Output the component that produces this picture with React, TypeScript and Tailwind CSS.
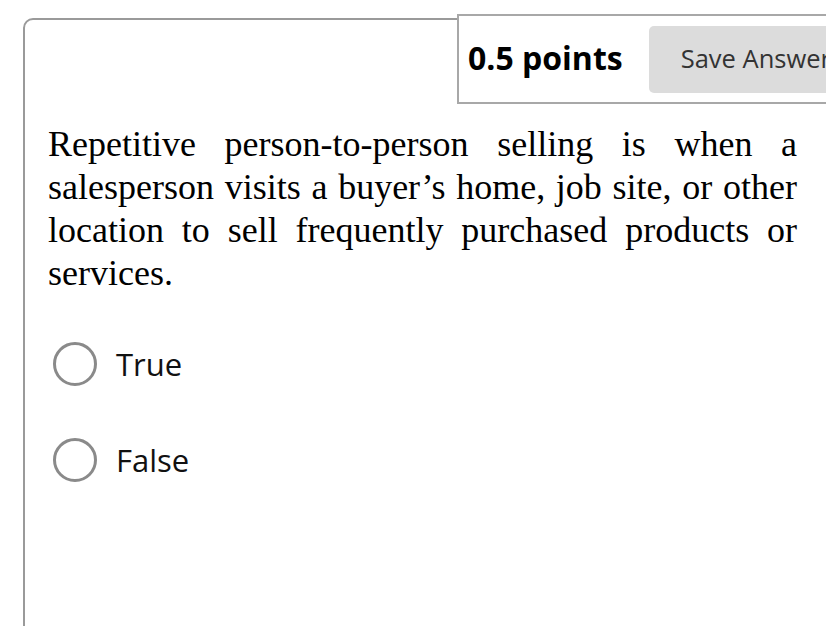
export default function App() {
  const options = ["True", "False"];
  return (
    <div className="w-[826px] h-[626px] overflow-hidden bg-white">
      <div className="relative ml-[23px] mt-[18px] w-[840px] h-[700px] rounded-tl-[10px] border-2 border-[#9a9a9a] bg-white">
        <div className="absolute left-[432px] top-[-6px] flex h-[90px] w-[420px] items-center border-2 border-[#a8a8a8] bg-white pl-[9px]">
          <span className="pb-[3px] text-[32px] font-bold leading-none text-black" style={{ fontFamily: '"Open Sans", sans-serif' }}>
            0.5 points
          </span>
          <button className="ml-[26px] flex h-[67px] flex-1 items-center rounded-[5px] bg-[#dcdcdc] pl-[32px] pb-[2px] text-[25.5px] text-[#333]" style={{ fontFamily: '"Open Sans", sans-serif' }}>
            Save Answer
          </button>
        </div>
        <div className="w-[772px] pl-[23px] pt-[103px]">
          <p className="text-justify text-[36px] leading-[43px] text-black" style={{ fontFamily: '"Liberation Serif", serif' }}>
            Repetitive person-to-person selling is when a salesperson visits a buyer’s home, job site, or other location to sell frequently purchased products or services.
          </p>
          <div className="mt-[46px] flex flex-col gap-[49px] pl-[5px]">
            {options.map((o) => (
              <label key={o} className="flex items-center">
                <span className="h-[44px] w-[44px] rounded-full border-[3px] border-[#8a8a8a]" />
                <span className="ml-[19px] text-[31px] text-[#111]" style={{ fontFamily: '"Open Sans", sans-serif' }}>
                  {o}
                </span>
              </label>
            ))}
          </div>
        </div>
      </div>
    </div>
  );
}
